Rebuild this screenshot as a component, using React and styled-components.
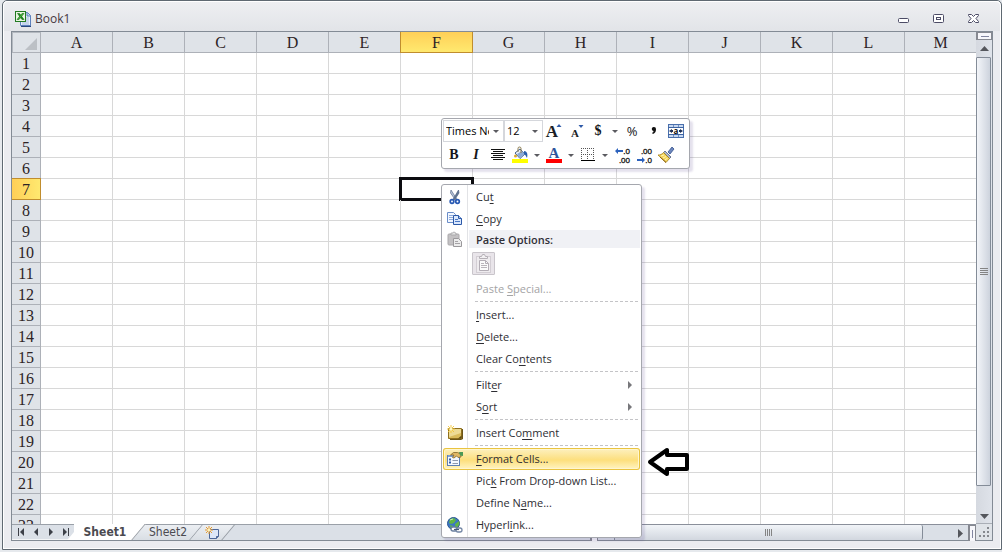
import React from "react";
import styled, { createGlobalStyle, css } from "styled-components";

const UI_FONT = '"Open Sans", "Noto Sans", sans-serif';
const CELL_FONT = '"Liberation Serif", "Times New Roman", serif';
const TAB_FONT = '"DejaVu Sans Condensed", "DejaVu Sans", sans-serif';

const GlobalStyle = createGlobalStyle`
  *, *::before, *::after { box-sizing: border-box; }
  body { margin: 0; background: #e6e9ed; font-family: ${UI_FONT}; color: #2b2b2b; overflow: hidden; }
  button { appearance: none; border: 0; padding: 0; margin: 0; background: none; color: inherit; font: inherit; }
  svg { display: block; flex: none; overflow: visible; }
`;

/* ---------- window ---------- */

const Window = styled.main`
  display: flex;
  flex-direction: column;
  height: calc(100vh - 2px);
  margin: 0 0 2px 2px;
  padding: 0 8px 8px;
  border: 1px solid #5f6972;
  border-radius: 5px 5px 0 0;
  background: #ebecf0;
  box-shadow: inset 0 0 0 1px #ffffff;
`;

const TitleBar = styled.header`
  display: flex;
  align-items: center;
  flex: none;
  height: 30px;
  margin: 0 -7px;
  padding: 6px 18px 0 11px;
  gap: 4px;
  background: linear-gradient(#eeeff2, #e2e4e8);
  box-shadow: inset 0 1px 0 #ffffff;
  border-radius: 4px 4px 0 0;
`;

const Title = styled.h1`
  flex: 1;
  margin: 0;
  font-size: 12px;
  line-height: 16px;
  font-weight: 400;
  color: #46383d;
`;

const WindowButtons = styled.div`
  display: flex;
  gap: 19px;
`;

const WindowButton = styled.button`
  display: flex;
  align-items: center;
  justify-content: center;
  width: 16px;
  height: 16px;
`;

const Workbook = styled.section`
  position: relative;
  display: flex;
  flex-direction: column;
  flex: 1;
  min-height: 0;
  border: 1px solid #838b95;
  background: #ffffff;
`;

const SheetArea = styled.div`
  display: flex;
  flex: 1;
  min-height: 0;
`;

const GridClip = styled.div`
  flex: 1;
  min-width: 0;
  overflow: hidden;
`;

/* ---------- grid ---------- */

const Grid = styled.table`
  table-layout: fixed;
  width: 965px;
  border-collapse: separate;
  border-spacing: 0;
  font-family: ${CELL_FONT};
  font-size: 16px;
  line-height: 18px;
  color: #2d2326;
`;

const activeHeader = css`
  background: linear-gradient(${(p) => (p.$row ? "90deg, " : "")}#ffcf57, #ffe96f);
  &::after {
    content: "";
    position: absolute;
    inset: ${(p) => (p.$row ? "-1px -1px -1px 0" : "0 -1px -1px -1px")};
    border: 1px solid #c08d2e;
    ${(p) => (p.$row ? "border-left: 0;" : "border-top: 0;")}
  }
`;

const HeaderCell = styled.th`
  position: relative;
  width: ${(p) => (p.$row ? 29 : 72)}px;
  height: 21px;
  padding: 2px 0 0;
  border-right: 1px solid #adb1b8;
  border-bottom: 1px solid #adb1b8;
  background: #dfe3e8;
  font-weight: 400;
  text-align: center;
  ${(p) => p.$active && activeHeader}
`;

const SelectAll = styled(HeaderCell)`
  padding: 0;
  border-left: 1px solid #b4b9c0;
  border-top: 1px solid #b4b9c0;
  svg { margin: 3px 3px 0 auto; }
`;

const Cell = styled.td`
  position: relative;
  height: 21px;
  padding: 0;
  border-right: 1px solid #d8d8d8;
  border-bottom: 1px solid #d8d8d8;
  ${(p) =>
    p.$selected &&
    css`
      &::after {
        content: "";
        position: absolute;
        inset: -2px;
        border: 3px solid #0c0c10;
      }
    `}
`;

/* ---------- scroll bars ---------- */

const VerticalBar = styled.div`
  display: flex;
  flex-direction: column;
  flex: none;
  width: 16px;
  background: linear-gradient(90deg, #d5d9e0, #dfe3ea);
`;

const SplitHandle = styled.button`
  flex: none;
  width: ${(p) => (p.$vertical ? 8 : 16)}px;
  height: ${(p) => (p.$vertical ? 16 : 8)}px;
  border: 2px solid #868991;
  border-width: ${(p) => (p.$vertical ? "1px 1px 0 2px" : "1px 1px 1px 2px")};
  background: #f7f7fb;
  display: flex;
  align-items: center;
  justify-content: center;
  &::after {
    content: "";
    width: ${(p) => (p.$vertical ? 1 : 8)}px;
    height: ${(p) => (p.$vertical ? 8 : 1)}px;
    background: #8286a0;
  }
`;

const ArrowButton = styled.button`
  display: flex;
  align-items: center;
  justify-content: center;
  flex: none;
  width: 16px;
  height: 16px;
`;

const VerticalThumb = styled.div`
  display: flex;
  flex-direction: column;
  align-items: center;
  justify-content: center;
  gap: 1px;
  flex: 1;
  width: 15px;
  margin-top: 1px;
  margin-bottom: 22px;
  border: 1px solid #848c98;
  border-radius: 1px;
  background: linear-gradient(90deg, #f3f5f9, #cdd3dd);
`;

const GripLine = styled.span`
  width: ${(p) => (p.$tall ? 1 : 8)}px;
  height: ${(p) => (p.$tall ? 7 : 1)}px;
  background: #848484;
`;

const BottomBar = styled.footer`
  display: flex;
  flex: none;
  height: 16px;
  background: #dbe0e7;
`;

const HorizontalBar = styled.div`
  display: flex;
  flex: 386;
  min-width: 0;
  border-top: 1px solid #8a8f9a;
`;

const HorizontalThumb = styled.div`
  display: flex;
  align-items: center;
  justify-content: center;
  gap: 1px;
  flex: 1;
  margin-right: 29px;
  border-right: 1px solid #848c98;
  border-left: 1px solid #848c98;
  border-radius: 0 2px 2px 0;
  background: linear-gradient(#f1f4f8, #d2d7df);
`;

const ResizeGrip = styled.div`
  display: flex;
  align-items: center;
  justify-content: center;
  flex: none;
  width: 16px;
  border-top: 1px solid #a9aeb6;
  margin-top: -1px;
  background: #dfe3e8;
`;

/* ---------- sheet tabs ---------- */

const TabStrip = styled.nav`
  display: flex;
  flex: 578;
  min-width: 0;
  border-top: 1px solid #9aa0a8;
`;

const TabNav = styled.div`
  display: flex;
  flex: none;
  width: 62px;
  padding-left: 1px;
  border-bottom: 1px solid #f3f5f7;
`;

const NavButton = styled(ArrowButton)`
  width: 15px;
  height: 14px;
`;

const Tab = styled.button`
  position: relative;
  flex: none;
  height: 15px;
  width: ${(p) => p.$width}px;
  font-family: ${TAB_FONT};
  font-size: 12px;
  line-height: 15px;
  text-align: center;
  font-weight: ${(p) => (p.$active ? 700 : 400)};
  color: #4b4a50;
  z-index: ${(p) => (p.$active ? 2 : 1)};
  &::before {
    content: "";
    position: absolute;
    inset: -1px 0 0 0;
    z-index: -1;
    background: ${(p) => (p.$active ? "#ffffff" : "linear-gradient(#eceff3, #d9dee4)")};
    border-right: 1px solid #8f959c;
    border-top: ${(p) => (p.$active ? 0 : 1)}px solid #9aa0a8;
    transform: skewX(-40deg);
  }
  svg { margin: 0 auto; }
`;

const FirstTab = styled(Tab)`
  padding-right: 3px;
  &::after {
    content: "";
    position: absolute;
    inset: -1px auto 0 0;
    width: 16px;
    z-index: -1;
    background: #ffffff;
  }
`;

/* ---------- floating panels ---------- */

const floating = css`
  position: absolute;
  border: 1px solid #a5a7ae;
  border-radius: 3px;
  background: #ffffff;
  box-shadow: 3px 3px 2px rgba(90, 70, 140, 0.16);
  z-index: 5;
`;

const MiniToolbar = styled.div`
  ${floating}
  left: 429px;
  top: 86px;
  width: 249px;
  padding: 1px 0 2px 1px;
  display: flex;
  flex-direction: column;
  gap: 2px;
`;

const ToolRow = styled.div`
  display: flex;
  height: 22px;
`;

const ToolButton = styled.button`
  display: flex;
  align-items: center;
  justify-content: center;
  flex: none;
  width: ${(p) => (p.$drop ? 12 : 22)}px;
  height: 22px;
  font-family: ${(p) => (p.$serif ? CELL_FONT : UI_FONT)};
  font-size: ${(p) => p.$size || 12}px;
  font-weight: ${(p) => (p.$bold ? 700 : 400)};
  font-style: ${(p) => (p.$italic ? "italic" : "normal")};
  line-height: 20px;
  color: #16161a;
`;

const Combo = styled.label`
  display: flex;
  align-items: center;
  gap: 4px;
  flex: none;
  width: ${(p) => p.$width}px;
  height: 22px;
  padding-right: 4px;
  border: 1px solid #d5d7dc;
`;

const ComboSelect = styled.select`
  appearance: none;
  flex: 1;
  min-width: 0;
  padding: 0 0 0 2px;
  border: 0;
  outline: 0;
  background: none;
  font-family: ${UI_FONT};
  font-size: 11px;
  line-height: 18px;
  color: #000000;
  text-overflow: clip;
`;

const ContextMenu = styled.div`
  ${floating}
  left: 429px;
  top: 152px;
  width: 201px;
  padding: 1px;
  font-size: 11px;
  background: linear-gradient(90deg, #ffffff 25px, #e2e3e6 25px, #e2e3e6 26px, #ffffff 26px);
`;

const MenuItem = styled.button`
  display: flex;
  align-items: center;
  width: 100%;
  height: 22px;
  padding-right: 8px;
  border-radius: 3px;
  line-height: 20px;
  text-align: left;
  color: ${(p) => (p.disabled ? "#a3a3a5" : "#2e2e33")};
  ${(p) =>
    p.$hot &&
    css`
      background: linear-gradient(#fdf1c4, #fce28a 45%, #fddf7c 55%, #fff6c9);
      box-shadow: inset 0 0 0 1px #e9c33f, inset 0 0 0 2px #fff6cf;
    `}
  u { text-underline-offset: 2px; }
`;

const MenuIcon = styled.span`
  display: flex;
  justify-content: center;
  flex: none;
  width: 24px;
  margin-right: 9px;
`;

const MenuLabel = styled.span`
  flex: 1;
  white-space: nowrap;
`;

const MenuHeading = styled.div`
  display: flex;
  align-items: center;
  height: 18px;
  font-weight: 600;
  line-height: 18px;
  padding-top: 2px;
  color: #303038;
  background: linear-gradient(90deg, transparent 26px, #f0f1f5 26px);
`;

const PasteRow = styled.div`
  height: 30px;
  padding: 4px 0 0 29px;
`;

const PasteButton = styled.button`
  display: flex;
  align-items: center;
  justify-content: center;
  width: 23px;
  height: 23px;
  border: 1px solid #c9c5cb;
  border-radius: 1px;
  background: #e9e5ea;
`;

const MenuRule = styled.hr`
  height: 4px;
  margin: 0 0 0 32px;
  border: 0;
  background: repeating-linear-gradient(90deg, #c4c4c7 0 3px, transparent 3px 5px) 0 1px / 100% 1px no-repeat;
`;

const Pointer = styled.svg`
  position: absolute;
  left: 635px;
  top: 413px;
  z-index: 6;
`;

/* ---------- drawings ---------- */

const Icon = ({ size = 16, height, children, ...rest }) => (
  <svg width={size} height={height || size} viewBox={`0 0 ${size} ${height || size}`} aria-hidden="true" {...rest}>
    {children}
  </svg>
);

const BookIcon = () => (
  <Icon>
    <path d="M6 2h7l3 3v11H6z" fill="#29477f" />
    <path d="M5.500 1.500h7l3 3v10h-10z" fill="#e6eefb" stroke="#5c80bd" />
    <path d="M12 1.500v3.500h3" fill="#b9cdec" stroke="#5c80bd" />
    <path d="M10 7h4M10 9h4M7 11h7M7 13h7" stroke="#a4b9de" />
    <rect x=".5" y=".5" width="10" height="10" fill="#e8f5e0" stroke="#227a22" />
    <path d="M2.500 2.500h2L9 8.500H7z" fill="#1d8a1d" stroke="#176c17" strokeWidth=".6" />
    <path d="M7 2.500h2L4 8.500H2z" fill="#46b53b" stroke="#176c17" strokeWidth=".6" />
  </Icon>
);

const Triangle = ({ dir = "down", size = 9, color = "#54565c" }) => {
  const turn = { down: 0, left: 90, up: 180, right: 270 }[dir];
  const h = Math.ceil(size / 2);
  const side = dir === "left" || dir === "right";
  return (
    <svg width={side ? h : size} height={side ? size : h} viewBox={side ? `0 0 ${h} ${size}` : `0 0 ${size} ${h}`} aria-hidden="true">
      <path
        fill={color}
        d={
          turn === 0
            ? `M0 0H${size}L${size / 2} ${h}Z`
            : turn === 180
            ? `M0 ${h}H${size}L${size / 2} 0Z`
            : turn === 90
            ? `M${h} 0V${size}L0 ${size / 2}Z`
            : `M0 0V${size}L${h} ${size / 2}Z`
        }
      />
    </svg>
  );
};

const EdgeArrow = ({ flip }) => (
  <Icon size={8}>
    <g transform={flip ? "translate(8 0) scale(-1 1)" : undefined} fill="#3d4048">
      <rect x="1" y="0" width="1" height="8" />
      <path d="M7 0v8L3 4z" />
    </g>
  </Icon>
);

const AlignIcon = () => (
  <Icon size={14} height={12}>
    <path d="M0 .5h14M2 2.500h10M0 4.500h14M2 6.500h10M0 8.500h14M2 10.500h10" stroke="#111" />
  </Icon>
);

const FillIcon = () => (
  <Icon>
    <rect x="0" y="12" width="16" height="4" fill="#ffff00" />
    <path d="M3 6l5-4 5 5-5 4.500z" fill="#e9eef8" stroke="#44658f" />
    <path d="M5 7l5-3 3 3-5 4z" fill="#8aa9d6" />
    <path d="M6 5V1.500a1.500 1.500 0 0 1 3 0V6" fill="none" stroke="#8a7a4d" />
    <path d="M12 4c3 0 4 3 3 7-1-1-1-3-3-4z" fill="#2c61ad" />
    <circle cx="3.500" cy="9" r="1.500" fill="#d9a531" />
  </Icon>
);

const FontColorIcon = () => (
  <Icon>
    <text x="8" y="11" textAnchor="middle" fontFamily={CELL_FONT} fontWeight="700" fontSize="15" fill="#2f569c">A</text>
    <rect x="0" y="12" width="16" height="4" fill="#ff0000" />
  </Icon>
);

const BorderIcon = () => (
  <Icon size={14}>
    <path d="M.5 0v12M6.500 0v12M12.500 0v12M0 .5h13M0 6.500h13" stroke="#555" strokeDasharray="1 1" />
    <path d="M0 12.500h14" stroke="#000" strokeWidth="1" />
  </Icon>
);

const DecimalIcon = ({ increase }) => (
  <Icon>
    <g fontFamily='"Liberation Sans", Arial, sans-serif' fontSize="8" fill="#111" stroke="#111" strokeWidth=".3">
      <text x="16" y="7" textAnchor="end">{increase ? ".0" : ".00"}</text>
      <text x="16" y="16" textAnchor="end">{increase ? ".00" : ".0"}</text>
    </g>
    {increase ? (
      <path d="M1 4l3-3v2h5v2H4v2z" fill="#2c62bd" />
    ) : (
      <path d="M9 13l-3-3v2H1v2h5v2z" fill="#2c62bd" />
    )}
  </Icon>
);

const BrushIcon = () => (
  <Icon>
    <path d="M10 5l4-5 2 2-4 5z" fill="#6d87bd" stroke="#33508c" strokeWidth=".8" />
    <path d="M7 4l6 6-1.500 1.500-6-6z" fill="#aab6cc" stroke="#56617c" strokeWidth=".8" />
    <path d="M5.500 5.500l6 6L8 15.500 0 8c2 0 4-.5 5.500-2.500z" fill="#f5d65c" stroke="#a37d16" strokeWidth=".8" />
    <path d="M3 9l3-1M5 11l3-1.500M7 13l2.500-2" stroke="#fff3b0" />
    <path d="M2 10l6 5.500" stroke="#8a5f12" />
  </Icon>
);

const MergeIcon = () => (
  <Icon height={14}>
    <rect x=".5" y=".5" width="15" height="13" fill="#c8d8f0" stroke="#4a70ad" />
    <path d="M0 3.500h16M0 10.500h16" stroke="#3d64a3" />
    <path d="M5.500 1v2M10.500 1v2M5.500 11v2M10.500 11v2" stroke="#6f8fc2" />
    <rect x="1" y="4" width="14" height="6" fill="#ffffff" />
    <path d="M1 7l3-2v1h1v2H4v1zM15 7l-3-2v1h-1v2h1v1z" fill="#1d2f55" />
    <text x="8" y="9.500" textAnchor="middle" fontFamily={UI_FONT} fontWeight="700" fontSize="8" fill="#111">a</text>
  </Icon>
);

const SizeAIcon = ({ grow }) => (
  <Icon>
    <text x={grow ? 6 : 7} y={grow ? 14 : 14} textAnchor="middle" fontFamily={CELL_FONT} fontWeight="700" fontSize={grow ? 17 : 11} fill="#1c1e26">A</text>
    <path d={grow ? "M10.500 4h5L13 1z" : "M10.500 2h5L13 5z"} fill="#2f5aa8" />
  </Icon>
);

const CutIcon = () => (
  <Icon>
    <path d="M4 1l6 9.500-1.500.5L3.500 4z" fill="#b7c3d8" stroke="#5a6d8e" strokeWidth=".7" />
    <path d="M11.500 1L6 10.500l1.500.5L12 4z" fill="#5f7391" stroke="#4d6180" strokeWidth=".7" />
    <circle cx="5" cy="12.500" r="1.800" fill="#fff" stroke="#2859b3" strokeWidth="1.700" />
    <circle cx="10.500" cy="12.500" r="1.800" fill="#fff" stroke="#2859b3" strokeWidth="1.700" />
  </Icon>
);

const CopyIcon = () => (
  <Icon>
    <path d="M.5 1.500h6l2 2v8h-8z" fill="#f2f7ff" stroke="#6a8dc9" />
    <path d="M2 4.500h4M2 6.500h5M2 8.500h4" stroke="#8eaadb" />
    <path d="M6.500 4.500h5l3 3v6h-8z" fill="#dbe8fd" stroke="#2c59a8" />
    <path d="M11.500 4.500v3h3" fill="#a8c2eb" stroke="#2c59a8" />
    <path d="M8 8.500h3M8 10.500h5" stroke="#4b78c5" />
  </Icon>
);

const PasteIcon = () => (
  <Icon>
    <rect x="1" y="2" width="11" height="11" rx="1" fill="#c3c1c3" stroke="#aaa8ab" />
    <path d="M4 3V1h2a1 1 0 0 1 2 0h1v2z" fill="#e2e2e2" stroke="#a5a3a6" strokeWidth=".8" />
    <path d="M6.500 6.500h5l3 3v5h-8z" fill="#ececec" stroke="#9a989b" />
    <path d="M8 9.500h3M8 11.500h5" stroke="#a5a3a6" />
  </Icon>
);

const ClipboardIcon = () => (
  <Icon size={17} height={19}>
    <rect x="1.500" y="2.500" width="14" height="16" fill="#efecef" stroke="#d3ced4" />
    <path d="M4.500 4.500v-2h2l1-2h2l1 2h2v2z" fill="#f2f0f2" stroke="#b5b0b6" />
    <path d="M4.500 6.500h6l3 3v7h-9z" fill="#fafafa" stroke="#b3adb5" />
    <path d="M10.500 6.500v3h3" fill="none" stroke="#b3adb5" />
    <path d="M6 9.500h3M6 11.500h6M6 13.500h6" stroke="#b9b4ba" />
  </Icon>
);

const CommentIcon = () => (
  <Icon>
    <path d="M3 4h13v10l-2 1H3z" fill="#6b5518" />
    <path d="M1.500 3.500h13v10h-13z" fill="#d9bb5c" stroke="#8f701f" />
    <path d="M2 4h12v4L2 12z" fill="#eddb96" />
    <path d="M11 13.500l3.500-3v3z" fill="#5d4a17" />
    <path d="M4 0v8M0 4h8M1 1l6 6M7 1L1 7" stroke="#f3c53a" strokeWidth=".9" />
    <circle cx="4" cy="4" r="1.500" fill="#fff7c2" />
  </Icon>
);

const FormatIcon = () => (
  <Icon>
    <rect x=".5" y="4.500" width="12" height="10" fill="#f4f8ff" stroke="#5d7fb4" />
    <path d="M2 8.500h2M2 11.500h2" stroke="#355ea7" strokeWidth="2" />
    <path d="M5.500 9.500H11M5.500 12.500H11" stroke="#8d99ad" />
    <path d="M1 5h6" stroke="#7fa0d4" strokeWidth="2" />
    <path d="M3.500 4l3-2.500h4L14 3v3l-3 .5-1.500-1.500-2.500 2-1.500-.5 1.500-2.500z" fill="#e0b765" stroke="#80652c" strokeWidth=".8" />
    <path d="M12 1h4v4l-3-.5z" fill="#4b9a55" />
  </Icon>
);

const LinkIcon = () => (
  <Icon>
    <circle cx="6.500" cy="6.500" r="6" fill="#3b77c6" stroke="#2b588e" />
    <path d="M3 2l4-1 2 2-2 3-3 1-2-1zM8 7l4-3 .5 3-2 3-2 1zM3 8l3 1v3H4z" fill="#61b545" />
    <path d="M3 3l3-1" stroke="#c7edb4" />
    <rect x="4" y="10" width="6" height="4" rx="2" fill="#fff" stroke="#6a7f9f" strokeWidth="1.300" />
    <rect x="9" y="11" width="6" height="4" rx="2" fill="#fff" stroke="#7487a5" strokeWidth="1.300" />
    <path d="M7 12.500h5" stroke="#46597a" strokeWidth="1.200" />
  </Icon>
);

const NewSheetIcon = () => (
  <Icon size={16} height={14}>
    <path d="M4.500 3.500h9v7l-2 2h-7z" fill="#dde7f8" stroke="#4d6799" />
    <path d="M13.500 10.500h-2v2" fill="#7a90bb" stroke="#4d6799" />
    <path d="M4 0v8M0 4h8M1 1l6 6M7 1L1 7" stroke="#e89b2c" />
    <circle cx="4" cy="4" r="1.500" fill="#fff2b8" />
  </Icon>
);

/* ---------- page ---------- */

const COLUMNS = "ABCDEFGHIJKLM".split("");
const ROWS = Array.from({ length: 23 }, (_, i) => i + 1);

const Item = ({ icon, children, arrow, ...rest }) => (
  <MenuItem role="menuitem" {...rest}>
    <MenuIcon>{icon}</MenuIcon>
    <MenuLabel>{children}</MenuLabel>
    {arrow && <Triangle dir="right" size={8} color="#77777b" />}
  </MenuItem>
);

const DropButton = ({ label }) => (
  <ToolButton $drop aria-label={label}>
    <Triangle size={6} color="#5b5b60" />
  </ToolButton>
);

export default function App() {
  return (
    <>
      <GlobalStyle />
      <Window>
        <TitleBar>
          <BookIcon />
          <Title>Book1</Title>
          <WindowButtons>
            <WindowButton aria-label="Minimize">
              <Icon size={12}>
                <rect x=".5" y="5.500" width="10" height="4" rx="1" fill="#fff" stroke="#4c4c66" />
              </Icon>
            </WindowButton>
            <WindowButton aria-label="Restore">
              <Icon size={12}>
                <rect x=".5" y="1.500" width="10" height="8" rx="1" fill="#fff" stroke="#4c4c66" />
                <rect x="3.500" y="4.500" width="4" height="2" fill="#fff" stroke="#4c4c66" />
              </Icon>
            </WindowButton>
            <WindowButton aria-label="Close">
              <Icon size={12}>
                <path d="M.5 1.500h3l2 2 2-2h3v1L8 5.500l2.500 3v1h-3l-2-2-2 2h-3v-1L3 5.500.5 2.500z" fill="#fff" stroke="#4c4c66" />
              </Icon>
            </WindowButton>
          </WindowButtons>
        </TitleBar>

        <Workbook>
          <SheetArea>
            <GridClip>
              <Grid>
                <thead>
                  <tr>
                    <SelectAll $row aria-label="Select all">
                      <Icon size={12}>
                        <path d="M12 0v12H0z" fill="#bcc0c5" />
                      </Icon>
                    </SelectAll>
                    {COLUMNS.map((c) => (
                      <HeaderCell key={c} scope="col" $active={c === "F"}>{c}</HeaderCell>
                    ))}
                  </tr>
                </thead>
                <tbody>
                  {ROWS.map((r) => (
                    <tr key={r}>
                      <HeaderCell scope="row" $row $active={r === 7}>{r}</HeaderCell>
                      {COLUMNS.map((c) => (
                        <Cell key={c} $selected={r === 7 && c === "F"} />
                      ))}
                    </tr>
                  ))}
                </tbody>
              </Grid>
            </GridClip>
            <VerticalBar>
              <SplitHandle aria-label="Split rows" />
              <ArrowButton aria-label="Scroll up"><Triangle dir="up" /></ArrowButton>
              <VerticalThumb>
                <GripLine /><GripLine /><GripLine /><GripLine />
              </VerticalThumb>
              <ArrowButton aria-label="Scroll down"><Triangle /></ArrowButton>
            </VerticalBar>
          </SheetArea>

          <BottomBar>
            <TabStrip>
              <TabNav>
                <NavButton aria-label="First sheet"><EdgeArrow /></NavButton>
                <NavButton aria-label="Previous sheet"><Triangle dir="left" size={8} color="#3d4048" /></NavButton>
                <NavButton aria-label="Next sheet"><Triangle dir="right" size={8} color="#3d4048" /></NavButton>
                <NavButton aria-label="Last sheet"><EdgeArrow flip /></NavButton>
              </TabNav>
              <FirstTab $active $width={65}>Sheet1</FirstTab>
              <Tab $width={58}>Sheet2</Tab>
              <Tab $width={32} aria-label="Insert worksheet"><NewSheetIcon /></Tab>
            </TabStrip>
            <HorizontalBar>
              <SplitHandle $vertical aria-label="Resize tabs" />
              <ArrowButton aria-label="Scroll left"><Triangle dir="left" /></ArrowButton>
              <HorizontalThumb>
                <GripLine $tall /><GripLine $tall /><GripLine $tall /><GripLine $tall />
              </HorizontalThumb>
              <ArrowButton aria-label="Scroll right"><Triangle dir="right" /></ArrowButton>
              <SplitHandle $vertical aria-label="Split columns" />
            </HorizontalBar>
            <ResizeGrip>
              <Icon size={12}>
                <path d="M9 1h2v2H9zM9 5h2v2H9zM5 5h2v2H5zM9 9h2v2H9zM5 9h2v2H5zM1 9h2v2H1z" fill="#85888e" />
              </Icon>
            </ResizeGrip>
          </BottomBar>

          <MiniToolbar role="toolbar" aria-label="Formatting">
            <ToolRow>
              <Combo $width={61}>
                <ComboSelect aria-label="Font"><option>Times New Roman</option></ComboSelect>
                <Triangle size={6} color="#5b5b60" />
              </Combo>
              <Combo $width={39}>
                <ComboSelect aria-label="Font size"><option>12</option></ComboSelect>
                <Triangle size={6} color="#5b5b60" />
              </Combo>
              <ToolButton aria-label="Grow font"><SizeAIcon grow /></ToolButton>
              <ToolButton aria-label="Shrink font"><SizeAIcon /></ToolButton>
              <ToolButton $bold $serif $size={14}>$</ToolButton>
              <DropButton label="Currency formats" />
              <ToolButton $size={13}>%</ToolButton>
              <ToolButton aria-label="Comma style">
                <Icon size={6} height={8}>
                  <path d="M3 0a2 2 0 0 1 2 2c0 3-1 4-3 5l-1-1c1-.5 1.500-1 1.500-2A2 2 0 0 1 3 0z" fill="#111" />
                </Icon>
              </ToolButton>
              <ToolButton aria-label="Merge and center"><MergeIcon /></ToolButton>
            </ToolRow>
            <ToolRow>
              <ToolButton $bold $serif $size={14}>B</ToolButton>
              <ToolButton $bold $italic $serif $size={14}>I</ToolButton>
              <ToolButton aria-label="Center"><AlignIcon /></ToolButton>
              <ToolButton aria-label="Fill color"><FillIcon /></ToolButton>
              <DropButton label="Fill colors" />
              <ToolButton aria-label="Font color"><FontColorIcon /></ToolButton>
              <DropButton label="Font colors" />
              <ToolButton aria-label="Borders"><BorderIcon /></ToolButton>
              <DropButton label="Border styles" />
              <ToolButton aria-label="Increase decimal"><DecimalIcon increase /></ToolButton>
              <ToolButton aria-label="Decrease decimal"><DecimalIcon /></ToolButton>
              <ToolButton aria-label="Format painter"><BrushIcon /></ToolButton>
            </ToolRow>
          </MiniToolbar>

          <ContextMenu role="menu">
            <Item icon={<CutIcon />}>Cu<u>t</u></Item>
            <Item icon={<CopyIcon />}><u>C</u>opy</Item>
            <MenuHeading>
              <MenuIcon><PasteIcon /></MenuIcon>
              Paste Options:
            </MenuHeading>
            <PasteRow>
              <PasteButton aria-label="Paste"><ClipboardIcon /></PasteButton>
            </PasteRow>
            <Item disabled>Paste <u>S</u>pecial...</Item>
            <MenuRule />
            <Item><u>I</u>nsert...</Item>
            <Item><u>D</u>elete...</Item>
            <Item>Clear Co<u>n</u>tents</Item>
            <MenuRule />
            <Item arrow>Filt<u>e</u>r</Item>
            <Item arrow>S<u>o</u>rt</Item>
            <MenuRule />
            <Item icon={<CommentIcon />}>Insert Co<u>m</u>ment</Item>
            <MenuRule />
            <Item $hot icon={<FormatIcon />}><u>F</u>ormat Cells...</Item>
            <Item>Pic<u>k</u> From Drop-down List...</Item>
            <Item>Define N<u>a</u>me...</Item>
            <Item icon={<LinkIcon />}>Hyperl<u>i</u>nk...</Item>
          </ContextMenu>

          <Pointer width="44" height="34" viewBox="0 0 44 34" aria-hidden="true">
            <path d="M3 17L20 5v5h20v14H20v5z" fill="#fff" stroke="#000" strokeWidth="4" strokeLinejoin="round" />
          </Pointer>
        </Workbook>
      </Window>
    </>
  );
}
